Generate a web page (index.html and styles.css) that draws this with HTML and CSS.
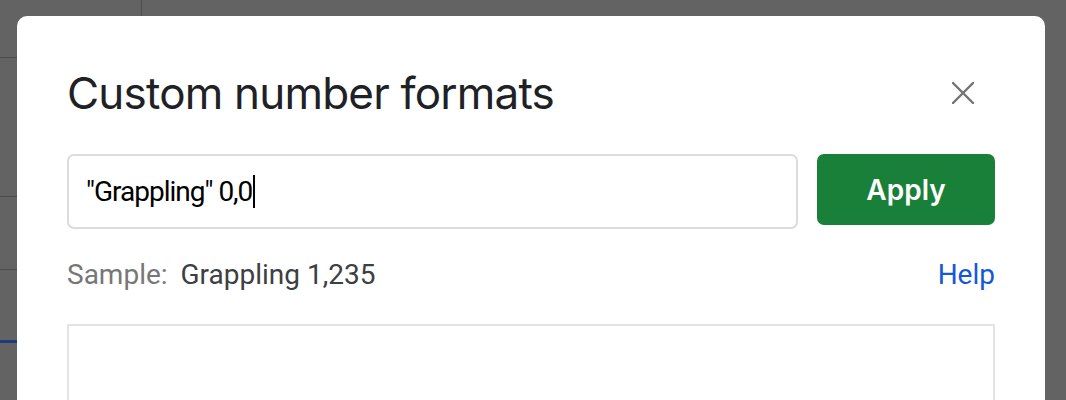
FILE: index.html
```html
<!DOCTYPE html>
<html lang="en">
<head>
    <meta charset="UTF-8">
    <meta name="viewport" content="width=device-width, initial-scale=1.0">
    <title>Custom number formats</title>
    <link rel="stylesheet" href="styles.css">
</head>
<body>
    <div class="sheet">
        <div class="gutter">
            <div class="row" style="height: 58px"></div>
            <div class="row" style="height: 139px"></div>
            <div class="row" style="height: 73px"></div>
            <div class="row selected" style="height: 73px"></div>
        </div>
    </div>

    <div class="dialog">
        <div class="dialog-head">
            <h1>Custom number formats</h1>
            <button type="button" class="close" aria-label="Close">
                <svg width="22" height="22" viewBox="0 0 22 22">
                    <path d="M1 1 L21 21 M21 1 L1 21" stroke="#737373" stroke-width="2.4" stroke-linecap="round"/>
                </svg>
            </button>
        </div>

        <form class="format-row">
            <div class="format-input">"Grappling" 0,0<span class="caret"></span></div>
            <button type="button" class="apply">Apply</button>
        </form>

        <div class="sample-row">
            <div class="sample">
                <span class="sample-label">Sample:</span>
                <span class="sample-value">Grappling 1,235</span>
            </div>
            <a href="#" class="help">Help</a>
        </div>

        <div class="format-list"></div>
    </div>
</body>
</html>
```

FILE: styles.css
```css
* {
    margin: 0;
    padding: 0;
    box-sizing: border-box;
}

body {
    font-family: Roboto, "Liberation Sans", sans-serif;
    background-color: #636363;
    height: 400px;
    overflow: hidden;
}

/* the spreadsheet behind the overlay */
.sheet {
    height: 400px;
    display: flex;
}
.gutter {
    width: 142px;
    height: 100%;
    border-right: 1px solid #4b4b4b;
}
.row {
    border-bottom: 1px solid #4b4b4b;
}
.row.selected {
    border-bottom: 3px solid #1d3c80;
}

.dialog {
    position: absolute;
    top: 16px;
    left: 17px;
    width: 1028px;
    height: 384px;
    overflow: hidden;
    background: white;
    border-radius: 10px 10px 0 0;
    padding: 51px 50px 0;
    display: flex;
    flex-direction: column;
}

.dialog-head {
    display: flex;
    align-items: center;
    justify-content: space-between;
}
.dialog-head h1 {
    font-family: Inter, "Open Sans", sans-serif;
    font-weight: 400;
    font-size: 44px;
    line-height: 52px;
    color: #202124;
    letter-spacing: -0.8px;
}
.close {
    width: 44px;
    height: 44px;
    margin-right: 10px;
    border: none;
    background: none;
    display: flex;
    align-items: center;
    justify-content: center;
}

.format-row {
    display: flex;
    align-items: flex-start;
    gap: 19px;
    margin-top: 35px;
}
.format-input {
    flex: 1;
    height: 75px;
    border: 2px solid #dadce0;
    border-radius: 7px;
    padding: 0 17px;
    display: flex;
    align-items: center;
    font-size: 28px;
    letter-spacing: -1px;
    color: #000;
}
.caret {
    display: inline-block;
    width: 2px;
    height: 33px;
    background: #000;
    margin-left: 1px;
}
.apply {
    width: 178px;
    height: 71px;
    border: none;
    border-radius: 7px;
    background-color: #188038;
    color: white;
    font-family: Inter, "Open Sans", sans-serif;
    font-weight: 600;
    font-size: 28px;
}

.sample-row {
    display: flex;
    justify-content: space-between;
    margin-top: 28px;
    font-size: 28px;
    line-height: 36px;
}
.sample-label {
    color: #777;
    margin-right: 6px;
}
.sample-value {
    color: #3c4043;
}
.help {
    color: #1558d6;
    text-decoration: none;
}

.format-list {
    margin-top: 31px;
    flex: 1;
    border: 2px solid #e3e3e3;
    border-bottom: none;
}
```
